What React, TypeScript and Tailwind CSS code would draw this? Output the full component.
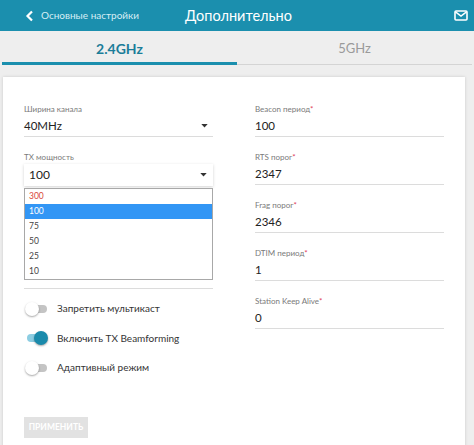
import React from "react";

const font = { fontFamily: 'Lato, "Noto Sans", sans-serif' };

function Field({ label, value, req }: { label: string; value: string; req?: boolean }) {
  return (
    <div className="mb-[13px]">
      <div className="h-[14px] text-[8px] leading-[14px] text-[#7a7a7a]">
        {label}
        {req && <span className="text-[#e0405a]">*</span>}
      </div>
      <div className="h-[21px] border-b border-[#dcdcdc] text-[11.5px] leading-[20px] text-[#222]">{value}</div>
    </div>
  );
}

function Toggle({ on, label }: { on?: boolean; label: string }) {
  return (
    <div className="flex h-[29.5px] items-center">
      <div className="relative ml-[1px] h-[14px] w-[22px]">
        <div className={`absolute left-[2px] top-[3px] h-[8px] w-[20px] rounded-full ${on ? "bg-[#8ccde2]" : "bg-[#c4c4c4]"}`} />
        <div
          className={`absolute top-0 h-[14px] w-[14px] rounded-full shadow-[0_1px_2px_rgba(0,0,0,0.35)] ${
            on ? "left-[9px] bg-[#1a8aab]" : "left-0 bg-white"
          }`}
        />
      </div>
      <span className="ml-[10px] text-[10px] text-[#333]">{label}</span>
    </div>
  );
}

export default function App() {
  return (
    <div className="h-[445px] w-[474px] overflow-hidden bg-[#eeeeee]" style={font}>
      <div className="flex h-[31px] items-center bg-[#1b8fae] pl-[25px] pr-[6px]">
        <svg width="10" height="12" viewBox="0 0 10 12" className="mr-[6px]">
          <path d="M7 1.5 L2.5 6 L7 10.5" fill="none" stroke="white" strokeWidth="2.2" />
        </svg>
        <span className="text-[10px] text-[#d6eef5]">Основные настройки</span>
        <span className="ml-[46px] text-[14.5px] text-white">Дополнительно</span>
        <div className="flex-1" />
        <svg width="14" height="11" viewBox="0 0 14 11">
          <rect x="1" y="1" width="12" height="9" rx="1" fill="none" stroke="white" strokeWidth="1.6" />
          <path d="M1.5 1.8 L7 6 L12.5 1.8" fill="none" stroke="white" strokeWidth="1.5" />
        </svg>
      </div>
      <div className="flex h-[34px] px-[2px]">
        <div className="flex w-[235px] items-center justify-center border-b-[3px] border-[#1b8fae] pt-[3px] text-[14px] font-bold text-[#1b7d99]">
          2.4GHz
        </div>
        <div className="flex flex-1 items-center justify-center pt-[3px] text-[13px] text-[#9a9a9a]">
          <div className="flex h-full w-full items-center justify-center border-b border-[#d4d4d4]">5GHz</div>
        </div>
      </div>
      <div className="ml-[3px] mt-[12px] h-[400px] w-[462px] bg-white px-[21px] pt-[25px] shadow-[0_0_3px_rgba(0,0,0,0.15)]">
        <div className="flex gap-[42px]">
          <div className="w-[192px]">
            <div className="mb-[13px]">
              <div className="h-[14px] text-[8px] leading-[14px] text-[#7a7a7a]">Ширина канала</div>
              <div className="flex h-[21px] items-center justify-between border-b border-[#dcdcdc] text-[11.5px] leading-[20px] text-[#222]">
                <span>40MHz</span>
                <svg width="7" height="4" viewBox="0 0 8 5" className="mr-[5px]">
                  <path d="M0 0 L8 0 L4 4.5 Z" fill="#333" />
                </svg>
              </div>
            </div>
            <div className="h-[14px] text-[8px] leading-[14px] text-[#7a7a7a]">TX мощность</div>
            <div className="flex h-[22px] items-center justify-between bg-white pl-[5px] text-[12px] text-[#222] shadow-[0_1px_3px_rgba(0,0,0,0.18)]">
              <span>100</span>
              <svg width="7" height="4" viewBox="0 0 8 5" className="mr-[6px]">
                <path d="M0 0 L8 0 L4 4.5 Z" fill="#333" />
              </svg>
            </div>
            <div className="mt-[2px] border border-[#a8a8a8] text-[8.5px] leading-[15px] text-[#444]">
              <div className="h-[15px] pl-[4px] text-[#d9473a]">300</div>
              <div className="h-[15px] bg-[#3296f5] pl-[4px] text-white">100</div>
              <div className="h-[15px] pl-[4px]">75</div>
              <div className="h-[15px] pl-[4px]">50</div>
              <div className="h-[15px] pl-[4px]">25</div>
              <div className="h-[15px] pl-[4px]">10</div>
            </div>
            <div className="mt-[8px] border-b border-[#dcdcdc]" />
            <div className="mt-[5px]">
              <Toggle label="Запретить мультикаст" />
              <Toggle on label="Включить TX Beamforming" />
              <Toggle label="Адаптивный режим" />
            </div>
            <button className="mt-[34px] flex h-[21px] w-[64px] items-center justify-center bg-[#e2e2e2] text-[8.5px] font-bold text-white" style={font}>
              ПРИМЕНИТЬ
            </button>
          </div>
          <div className="w-[192px]">
            <Field label="Beacon период" value="100" req />
            <Field label="RTS порог" value="2347" req />
            <Field label="Frag порог" value="2346" req />
            <Field label="DTIM период" value="1" req />
            <Field label="Station Keep Alive" value="0" req />
          </div>
        </div>
      </div>
    </div>
  );
}
